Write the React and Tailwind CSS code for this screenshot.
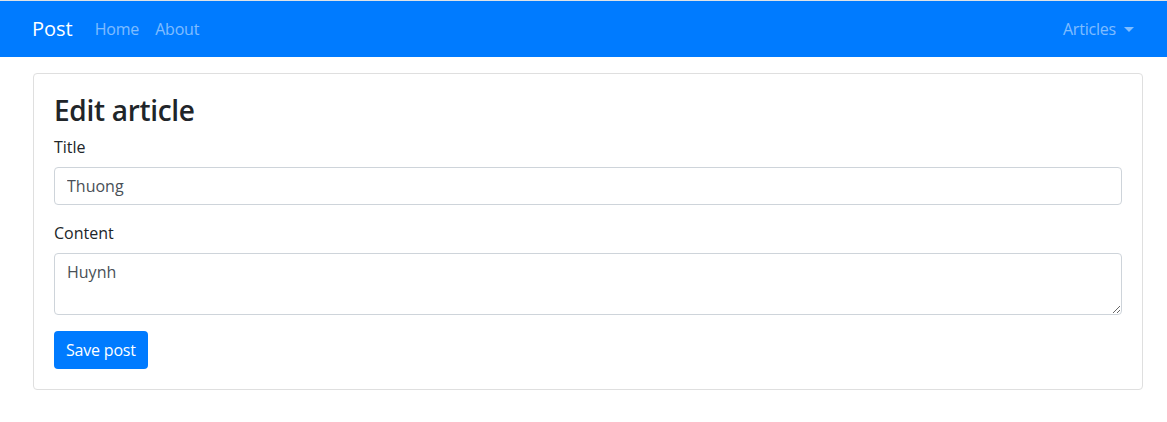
import React from 'react';

const App = () => {
  return (
    <div className="min-h-screen bg-white text-[#212529] text-base leading-6" style={{ fontFamily: '"Open Sans", "Noto Sans", sans-serif' }}>
      {/* Navbar */}
      <nav className="border-t border-[#dee2e6] bg-[#007bff]">
        <div className="flex h-14 items-center justify-between pl-[32px] pr-[33px]">
          <div className="flex items-center">
            <a href="#" className="mr-[14px] text-xl leading-[30px] text-white">Post</a>
            <a href="#" className="px-2 tracking-[-0.2px] text-white/50">Home</a>
            <a href="#" className="px-2 tracking-[-0.2px] text-white/50">About</a>
          </div>
          <a href="#" className="flex items-center tracking-[-0.2px] text-white/50">
            Articles
            <span className="ml-[8px] inline-block h-0 w-0 border-x-[5px] border-t-[5px] border-x-transparent border-t-white/50" />
          </a>
        </div>
      </nav>

      {/* Card */}
      <div className="ml-[33px] mr-[24px] mt-4 rounded border border-[#dfdfdf]">
        <div className="p-5">
          <h3 className="mb-2 text-[28px] font-semibold leading-[33px] tracking-[-0.3px]">Edit article</h3>
          <form onSubmit={(e) => e.preventDefault()}>
            <div className="mb-4">
              <label className="mb-2 inline-block">Title</label>
              <input
                type="text"
                defaultValue="Thuong"
                className="block h-[38px] w-full rounded border border-[#ced4da] px-3 py-1.5 text-[#495057] outline-none"
              />
            </div>
            <div className="mb-4">
              <label className="mb-2 inline-block">Content</label>
              <textarea
                rows={2}
                defaultValue="Huynh"
                className="block h-[62px] w-full rounded border border-[#ced4da] px-3 py-1.5 text-[#495057] outline-none"
              />
            </div>
            <button type="submit" className="h-[38px] rounded bg-[#007bff] px-3 tracking-[-0.2px] text-white">
              Save post
            </button>
          </form>
        </div>
      </div>
    </div>
  );
};

export default App;
